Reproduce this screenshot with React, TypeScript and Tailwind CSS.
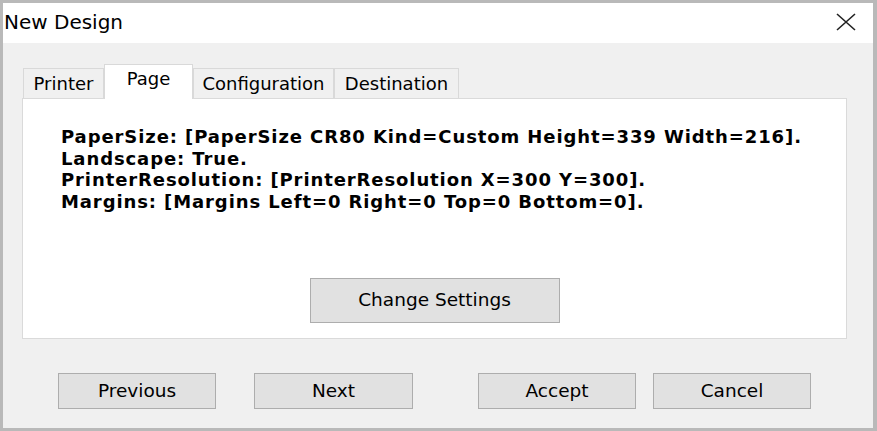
import React from "react";

const font = { fontFamily: '"DejaVu Sans", "Liberation Sans", sans-serif' };

function Tab({ label, active, width }: { label: string; active?: boolean; width: string }) {
  if (active) {
    return (
      <div
        className={`${width} relative z-10 -mb-px h-[35px] bg-white border border-b-0 border-[#d9d9d9] flex justify-center pt-[2px] text-[18px] leading-[24px] text-black`}
      >
        {label}
      </div>
    );
  }
  return (
    <div
      className={`${width} h-[30px] bg-[#f0f0f0] border border-b-0 border-[#d9d9d9] flex justify-center pt-[3px] text-[18px] leading-[24px] text-black`}
    >
      {label}
    </div>
  );
}

function Button({ label, className }: { label: string; className: string }) {
  return (
    <button
      className={`${className} bg-[#e1e1e1] border border-[#adadad] text-[18.5px] text-black flex items-center justify-center`}
    >
      {label}
    </button>
  );
}

export default function App() {
  return (
    <div
      style={font}
      className="w-[877px] h-[431px] flex flex-col bg-[#f0f0f0] border-[#b9b9b9] border-t-[3px] border-l-[3px] border-r-[4px] border-b-[3px]"
    >
      {/* Barre de titre */}
      <div className="h-[40px] bg-white flex items-center justify-between pl-px pr-[16px]">
        <span className="text-[20px] text-black leading-none -mt-[3px]">New Design</span>
        <svg width="22" height="18" viewBox="0 0 22 18" className="-mt-[3px]">
          <path d="M2 1 L20 17 M20 1 L2 17" stroke="#222" strokeWidth="1.6" fill="none" />
        </svg>
      </div>

      {/* Onglets */}
      <div className="flex flex-col">
        <div className="mt-[21px] pl-[20px] flex items-end h-[34px]">
          <Tab label="Printer" width="w-[81px]" />
          <Tab label="Page" width="w-[89px]" active />
          <Tab label="Configuration" width="w-[141px]" />
          <Tab label="Destination" width="w-[125px]" />
        </div>

        <div className="ml-[19px] w-[825px] h-[241px] bg-white border border-[#dadada] flex flex-col">
          <div className="pt-[27px] pl-[38px] font-bold text-[18px] tracking-[0.9px] leading-[21.7px] text-black">
            <div>PaperSize: [PaperSize CR80 Kind=Custom Height=339 Width=216].</div>
            <div>Landscape: True.</div>
            <div>PrinterResolution: [PrinterResolution X=300 Y=300].</div>
            <div>Margins: [Margins Left=0 Right=0 Top=0 Bottom=0].</div>
          </div>
          <div className="mt-[65px] flex justify-center">
            <Button label="Change Settings" className="w-[250px] h-[45px]" />
          </div>
        </div>

        {/* Boutons de navigation */}
        <div className="mt-[34px] flex pl-[55px]">
          <Button label="Previous" className="w-[158px] h-[36px]" />
          <Button label="Next" className="ml-[38px] w-[159px] h-[36px]" />
          <Button label="Accept" className="ml-[65px] w-[158px] h-[36px]" />
          <Button label="Cancel" className="ml-[17px] w-[158px] h-[36px]" />
        </div>
      </div>
    </div>
  );
}
